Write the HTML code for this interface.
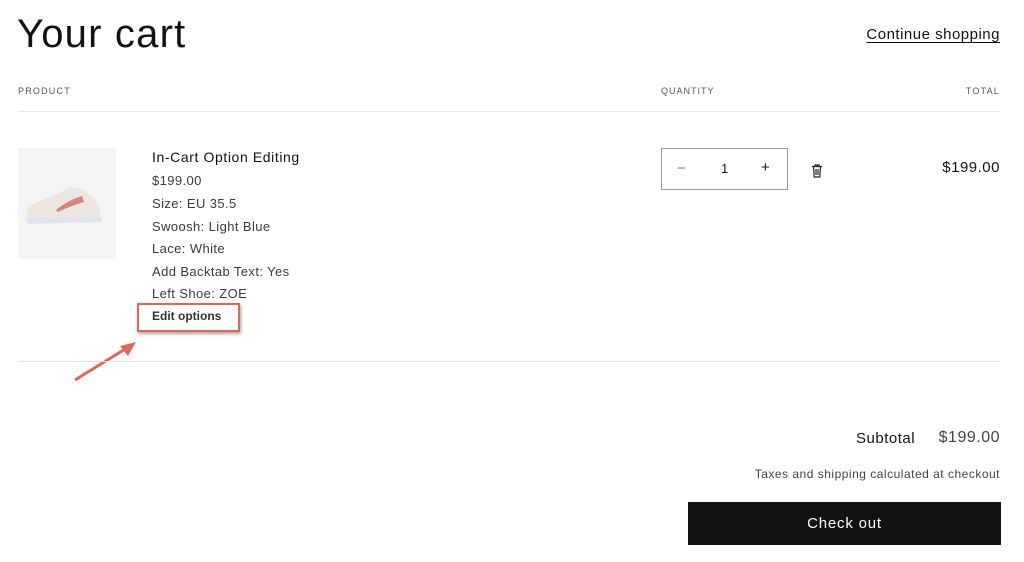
<!DOCTYPE html>
<html><head><meta charset="utf-8"><style>
body{margin:0;width:1024px;height:562px;background:#fff;font-family:"Liberation Sans",sans-serif;color:#121212;position:relative;overflow:hidden}
.a{position:absolute;white-space:nowrap}
.line{position:absolute;left:18px;width:982px;height:1px;background:#e6e6e6}
.meta{font-size:13px;color:#3a3a3a;letter-spacing:.4px;left:152px}
</style></head><body>
<div class="a" style="left:17px;top:12px;font-size:40px;letter-spacing:1.2px">Your cart</div>
<div class="a" style="right:24px;top:26px;font-size:15px;letter-spacing:.5px;text-decoration:underline;text-underline-offset:3px">Continue shopping</div>
<div class="a" style="left:18px;top:86px;font-size:9px;letter-spacing:1.2px;color:#555">PRODUCT</div>
<div class="a" style="left:661px;top:86px;font-size:9px;letter-spacing:1px;color:#555">QUANTITY</div>
<div class="a" style="right:24px;top:86px;font-size:9px;letter-spacing:1.2px;color:#555">TOTAL</div>
<div class="line" style="top:111px"></div>
<div class="a" style="left:18px;top:148px;width:98px;height:111px;background:#f4f4f4">
<svg width="98" height="111" viewBox="0 0 98 111"><path d="M8 69 L10 60 Q20 52 36 48 L50 40 Q60 38 68 44 L78 52 L82 62 L83 70 L20 72 Z" fill="#ece6e0"/><path d="M8 70 L84 70 L84 74 L10 76 Z" fill="#dfe3ef"/><path d="M38 62 Q50 52 64 48 L66 54 Q52 58 40 64Z" fill="#d9857d"/></svg></div>
<div class="a" style="left:152px;top:149px;font-size:14px;letter-spacing:.6px">In-Cart Option Editing</div>
<div class="a meta" style="top:173px">$199.00</div>
<div class="a meta" style="top:196px">Size: EU 35.5</div>
<div class="a meta" style="top:219px">Swoosh: Light Blue</div>
<div class="a meta" style="top:241px">Lace: White</div>
<div class="a meta" style="top:264px">Add Backtab Text: Yes</div>
<div class="a meta" style="top:286px">Left Shoe: ZOE</div>
<div class="a" style="left:137px;top:303px;width:99px;height:25px;border:2.5px solid #e0665a;box-shadow:1px 2px 3px rgba(0,0,0,.35)"></div>
<div class="a" style="left:152px;top:309px;font-size:12px;font-weight:bold;color:#333">Edit options</div>
<svg class="a" style="left:70px;top:338px" width="70" height="46"><line x1="5" y1="42" x2="60" y2="8" stroke="#e0665a" stroke-width="3"/><path d="M66 4 L50 8 L58 18Z" fill="#e0665a"/></svg>
<div class="a" style="left:661px;top:148px;width:125px;height:40px;border:1px solid #999"></div>
<div class="a" style="left:677px;top:160px;font-size:15px;color:#777">−</div>
<div class="a" style="left:721px;top:161px;font-size:13px">1</div>
<div class="a" style="left:761px;top:159px;font-size:15px">+</div>
<svg class="a" style="left:811px;top:164px" width="12" height="14" viewBox="0 0 12 14"><path d="M1 2.5h10M4 2.5V1h4v1.5M2.5 2.5l.7 10.5h5.6l.7-10.5M5 5v6M7 5v6" fill="none" stroke="#222" stroke-width="1.2"/></svg>
<div class="a" style="right:24px;top:159px;font-size:15px;letter-spacing:.5px">$199.00</div>
<div class="line" style="top:361px"></div>
<div class="a" style="left:856px;top:430px;font-size:15px;letter-spacing:.5px">Subtotal</div>
<div class="a" style="right:24px;top:429px;font-size:16px;letter-spacing:.5px;color:#444">$199.00</div>
<div class="a" style="right:24px;top:467px;font-size:12px;letter-spacing:.5px;color:#444">Taxes and shipping calculated at checkout</div>
<div class="a" style="left:688px;top:502px;width:313px;height:43px;background:#121212;color:#fff;font-size:15px;letter-spacing:.8px;text-align:center;line-height:43px">Check out</div>
</body></html>
